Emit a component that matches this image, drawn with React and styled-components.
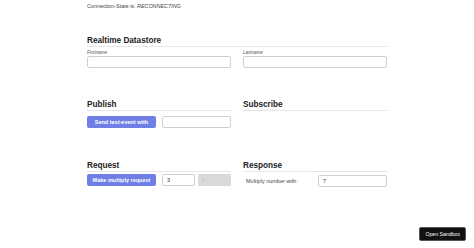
import React from 'react';
import styled, { createGlobalStyle } from 'styled-components';

const GlobalStyle = createGlobalStyle`
  html, body {
    margin: 0;
    padding: 0;
    background: #ffffff;
  }
  body {
    font-family: "Liberation Sans", Arial, sans-serif;
    color: #333333;
  }
`;

const Page = styled.div`
  width: 300px;
  padding: 3px 0 0 87px;
  font-size: 5.5px;
`;

const Status = styled.div`
  font-size: 5.4px;
  line-height: 7px;
  color: #444;
  em {
    font-style: italic;
  }
`;

const Section = styled.section`
  margin-top: ${(p) => p.$top}px;
`;

const Grid = styled.div`
  display: grid;
  grid-template-columns: 144px 144px;
  column-gap: 12px;
`;

const Heading = styled.h2`
  margin: 0;
  font-size: 8.2px;
  line-height: 11px;
  font-weight: 700;
  color: #222;
  border-bottom: 1px solid #e6e6e6;
`;

const Field = styled.div`
  display: flex;
  flex-direction: column;
  margin-top: 3px;
`;

const Label = styled.label`
  font-size: 4.5px;
  line-height: 6px;
  font-style: italic;
  color: #555;
`;

const Input = styled.input`
  box-sizing: border-box;
  width: ${(p) => p.$w || '100%'};
  height: 12px;
  margin: 0;
  padding: 0 4px;
  border: 1px solid #cfcfcf;
  border-radius: 2px;
  background: #fff;
  font-family: "Liberation Sans", Arial, sans-serif;
  font-size: 5.5px;
  color: #333;
  outline: none;
`;

const Row = styled.div`
  display: flex;
  align-items: center;
  margin-top: ${(p) => p.$top || 6}px;
  gap: ${(p) => p.$gap || 6}px;
`;

const Button = styled.button`
  box-sizing: border-box;
  width: 69px;
  height: 12px;
  margin: 0;
  padding: 0;
  border: none;
  border-radius: 2px;
  background: #6f7fe6;
  color: #fff;
  font-family: "Liberation Sans", Arial, sans-serif;
  font-size: 5.5px;
  font-weight: 700;
`;

const Pair = styled.div`
  display: flex;
  gap: 3px;
`;

const Result = styled.div`
  box-sizing: border-box;
  width: 33px;
  height: 12px;
  padding: 0 4px;
  background: #d9d9d9;
  color: #777;
  font-size: 5.5px;
  line-height: 12px;
  border-radius: 1px;
`;

const ResponseRow = styled.div`
  display: flex;
  align-items: center;
  justify-content: space-between;
  margin-top: 3px;
  padding-left: 3px;
`;

const RowLabel = styled.span`
  font-size: 5.5px;
  color: #444;
`;

const SandboxButton = styled.button`
  position: fixed;
  right: 8px;
  bottom: 7px;
  height: 14px;
  padding: 0 5px;
  border: 1px solid #555;
  border-radius: 2px;
  background: #111;
  color: #fff;
  font-family: "Liberation Sans", Arial, sans-serif;
  font-size: 5.2px;
`;

export default function App() {
  return (
    <>
      <GlobalStyle />
      <Page>
        <Status>
          Connection-State is: <em>RECONNECTING</em>
        </Status>

        <Section $top={25}>
          <Heading>Realtime Datastore</Heading>
          <Grid>
            <Field>
              <Label>Firstname</Label>
              <Input />
            </Field>
            <Field>
              <Label>Lastname</Label>
              <Input />
            </Field>
          </Grid>
        </Section>

        <Section $top={31}>
          <Grid>
            <div>
              <Heading>Publish</Heading>
              <Row $top={5}>
                <Button>Send test-event with</Button>
                <Input $w="69px" />
              </Row>
            </div>
            <div>
              <Heading>Subscribe</Heading>
            </div>
          </Grid>
        </Section>

        <Section $top={32}>
          <Grid>
            <div>
              <Heading>Request</Heading>
              <Row $top={2}>
                <Button>Make multiply request</Button>
                <Pair>
                  <Input $w="33px" defaultValue="3" />
                  <Result>-</Result>
                </Pair>
              </Row>
            </div>
            <div>
              <Heading>Response</Heading>
              <ResponseRow>
                <RowLabel>Multiply number with:</RowLabel>
                <Input $w="69px" defaultValue="7" />
              </ResponseRow>
            </div>
          </Grid>
        </Section>
      </Page>
      <SandboxButton>Open Sandbox</SandboxButton>
    </>
  );
}
